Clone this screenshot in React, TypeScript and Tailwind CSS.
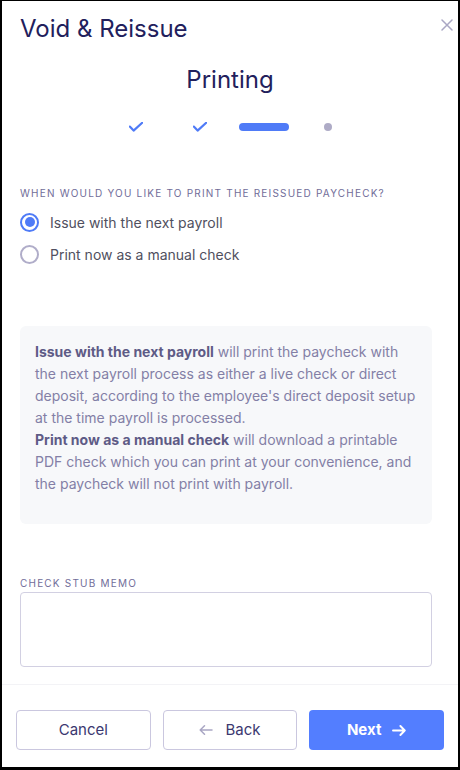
import React from "react";

const Check = () => (
  <svg width="14" height="10" viewBox="0 0 14 10" fill="none">
    <polyline points="0.8,4.6 4.6,8.6 13.2,0.8" stroke="#4f7bf7" strokeWidth="2.2" strokeLinecap="round" strokeLinejoin="round" />
  </svg>
);

const ArrowLeft = () => (
  <svg width="14" height="10" viewBox="0 0 14 10" fill="none">
    <path d="M13 5H1.2M5.5 0.8L1.2 5l4.3 4.2" stroke="#a9a6c4" strokeWidth="1.5" strokeLinecap="round" strokeLinejoin="round" />
  </svg>
);

const ArrowRight = () => (
  <svg width="14" height="11" viewBox="0 0 14 11" fill="none">
    <path d="M1 5.5h11.8M8.4 1l4.4 4.5L8.4 10" stroke="#ffffff" strokeWidth="1.9" strokeLinecap="round" strokeLinejoin="round" />
  </svg>
);

export default function App() {
  return (
    <div
      className="relative w-[460px] h-[770px] bg-white border-black border-l-2 border-r-2 border-t border-b-[3px] flex flex-col"
      style={{ fontFamily: "Inter, 'Noto Sans', sans-serif" }}
    >
      <button className="absolute left-[438px] top-[17px] w-[14px] h-[14px] flex items-center justify-center">
        <svg width="12" height="12" viewBox="0 0 12 12" fill="none">
          <path d="M1 1l10 10M11 1L1 11" stroke="#aaa7c4" strokeWidth="1.5" strokeLinecap="round" />
        </svg>
      </button>

      <div className="flex-1 flex flex-col">
        <div className="px-[18px]">
          <h1 className="pt-[12px] text-[24px] leading-[32px] text-[#22205c] font-normal">Void &amp; Reissue</h1>
          <h2 className="mt-[19px] text-center text-[24px] leading-[32px] text-[#22205c] font-normal">Printing</h2>
          <div className="mt-[24px] h-[14px] flex justify-center items-center pl-[4px]">
            <div className="w-16 flex justify-center items-center"><Check /></div>
            <div className="w-16 flex justify-center items-center"><Check /></div>
            <div className="w-16 flex justify-center items-center">
              <div className="w-[50px] h-[8px] rounded-full bg-[#4f7bf7]" />
            </div>
            <div className="w-16 flex justify-center items-center">
              <div className="w-[8px] h-[8px] rounded-full bg-[#aeabc6]" />
            </div>
          </div>
        </div>

        <div className="pl-[18px] pr-[26px]">
          <div className="mt-[52px] text-[10px] leading-[14px] tracking-[0.12em] uppercase text-[#716d99]">
            When would you like to print the reissued paycheck?
          </div>
          <div className="mt-[6px] flex flex-col">
            <label className="h-[32px] flex items-center gap-[11px]">
              <span className="w-[19px] h-[19px] rounded-full border-2 border-[#4f7bf7] flex items-center justify-center">
                <span className="w-[10px] h-[10px] rounded-full bg-[#4f7bf7]" />
              </span>
              <span className="text-[14px] text-[#505060]">Issue with the next payroll</span>
            </label>
            <label className="h-[32px] flex items-center gap-[11px]">
              <span className="w-[19px] h-[19px] rounded-full border-2 border-[#b0adc9]" />
              <span className="text-[14px] text-[#505060]">Print now as a manual check</span>
            </label>
          </div>

          <div className="mt-[56px] rounded-md bg-[#f7f8fa] pt-[15px] pb-[29px] px-[15px] text-[14px] leading-[22px] text-[#837fa6]">
            <p>
              <span className="font-bold text-[#5e5b86]">Issue with the next payroll</span> will print the paycheck with the next payroll process as either a live check or direct deposit, according to the employee's direct deposit setup at the time payroll is processed.
            </p>
            <p>
              <span className="font-bold text-[#5e5b86]">Print now as a manual check</span> will download a printable PDF check which you can print at your convenience, and the paycheck will not print with payroll.
            </p>
          </div>

          <div className="mt-[52px] text-[10px] leading-[14px] tracking-[0.12em] uppercase text-[#716d99]">
            Check stub memo
          </div>
          <textarea className="mt-[2px] block w-full h-[75px] rounded-[4px] border border-[#d2d0e2] resize-none outline-none" />
        </div>
      </div>

      <div className="border-t border-[#f3f3f6] pt-[25px] pb-[17px] px-[14px] grid grid-cols-3 gap-[12px]">
        <button className="h-[40px] rounded-[4px] border border-[#cac7df] text-[15px] text-[#3b3870] flex items-center justify-center">
          Cancel
        </button>
        <button className="h-[40px] rounded-[4px] border border-[#cac7df] text-[15px] text-[#3b3870] flex items-center justify-center gap-[12px]">
          <ArrowLeft />
          <span>Back</span>
        </button>
        <button className="h-[40px] rounded-[4px] bg-[#537eff] text-[15px] font-bold text-white flex items-center justify-center gap-[11px]">
          <span>Next</span>
          <ArrowRight />
        </button>
      </div>
    </div>
  );
}
